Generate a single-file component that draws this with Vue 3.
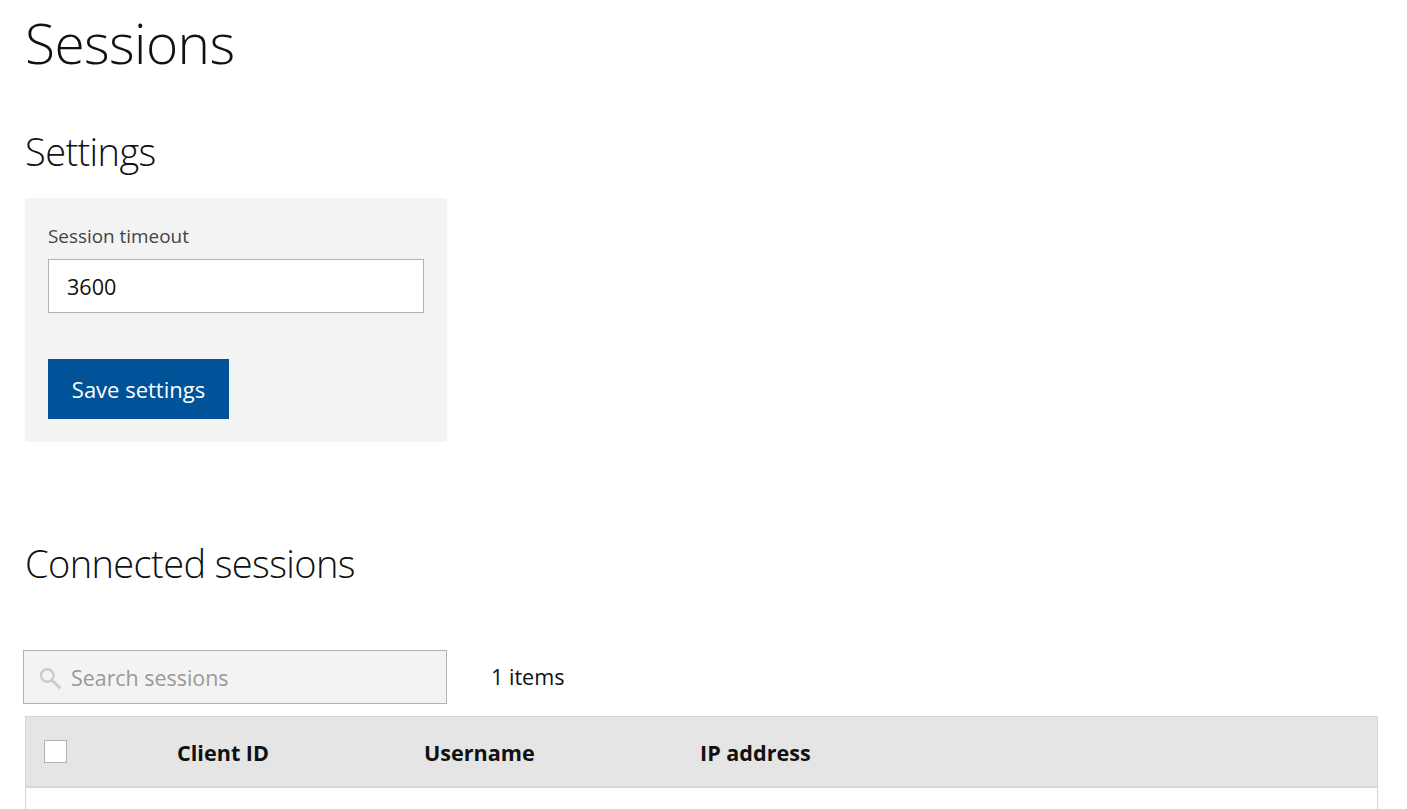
<template>
  <div class="page">
    <h1 class="title">Sessions</h1>

    <section class="settings">
      <h2 class="heading">Settings</h2>
      <form class="panel" @submit.prevent>
        <label class="label" for="timeout">Session timeout</label>
        <input id="timeout" v-model="timeout" class="text-input" type="text" />
        <button class="save" type="submit">Save settings</button>
      </form>
    </section>

    <section class="connected">
      <h2 class="heading">Connected sessions</h2>
      <div class="toolbar">
        <div class="search">
          <svg class="search-icon" width="23" height="23" viewBox="0 0 23 23" fill="none">
            <circle cx="8.3" cy="8.5" r="6.3" stroke="#cccccc" stroke-width="2.5" />
            <path d="M12.8 13l8.4 8.4" stroke="#cccccc" stroke-width="3" />
          </svg>
          <input class="search-input" type="text" placeholder="Search sessions" />
        </div>
        <span class="count">{{ sessions.length }} items</span>
      </div>
      <div class="table">
        <div class="table-head">
          <span class="check"></span>
          <span v-for="col in columns" :key="col.name" class="col" :style="{ width: col.width + 'px' }">{{ col.name }}</span>
        </div>
        <div class="table-body"></div>
      </div>
    </section>
  </div>
</template>

<script setup>
import { ref } from 'vue'

const timeout = ref('3600')
const sessions = ref([{ id: 1 }])
const columns = [
  { name: 'Client ID', width: 247 },
  { name: 'Username', width: 276 },
  { name: 'IP address', width: 200 }
]
</script>

<style>
html, body {
  margin: 0;
  background: #fff;
  overflow: hidden;
}
</style>

<style scoped>
.page {
  height: 809px;
  overflow: hidden;
  padding: 0 29px 0 25px;
  font-family: "Open Sans", "Noto Sans", sans-serif;
  color: #111;
}

.title {
  margin: 0;
  padding-top: 7px;
  font-size: 55px;
  line-height: 72px;
  font-weight: 300;
  letter-spacing: -0.6px;
}

.settings {
  margin-top: 49px;
}

.heading {
  margin: 0;
  font-size: 38px;
  line-height: 46px;
  font-weight: 300;
  letter-spacing: -0.6px;
}

.panel {
  display: flex;
  flex-direction: column;
  align-items: flex-start;
  box-sizing: border-box;
  width: 422px;
  height: 244px;
  margin-top: 24px;
  padding: 23px;
  background: #f3f3f3;
  border-radius: 2px;
}

.label {
  font-size: 18.9px;
  line-height: 30px;
  color: #444;
}

.text-input {
  box-sizing: border-box;
  width: 376px;
  height: 54px;
  margin-top: 8px;
  padding: 0 18px;
  border: 1px solid #b3b3b3;
  background: #fff;
  font: inherit;
  font-size: 21.6px;
  color: #111;
  outline: none;
}

.save {
  width: 181px;
  height: 60px;
  margin-top: 46px;
  padding: 0;
  border: 0;
  background: #005299;
  color: #fff;
  font: inherit;
  font-size: 22px;
}

.connected {
  margin-top: 98px;
}

.toolbar {
  display: flex;
  align-items: center;
  margin: 64px 0 12px -2px;
}

.search {
  position: relative;
  box-sizing: border-box;
  width: 424px;
  height: 54px;
  border: 1px solid #b3b3b3;
  background: #f3f3f3;
}

.search-icon {
  position: absolute;
  left: 15px;
  top: 16px;
}

.search-input {
  box-sizing: border-box;
  width: 100%;
  height: 100%;
  padding: 0 0 0 47px;
  border: 0;
  background: transparent;
  font: inherit;
  font-size: 21.4px;
  outline: none;
}

.search-input::placeholder {
  color: #999;
  opacity: 1;
}

.count {
  margin-left: 44px;
  font-size: 21.6px;
  line-height: 54px;
}

.table {
  border: 1px solid #d6d6d6;
  border-width: 0 1px;
}

.table-head {
  display: flex;
  align-items: center;
  box-sizing: border-box;
  height: 72px;
  border-top: 1px solid #d6d6d6;
  border-bottom: 2px solid #d6d6d6;
  background: #e5e5e5;
  padding-left: 18px;
}

.check {
  box-sizing: border-box;
  width: 23px;
  height: 23px;
  margin-right: 110px;
  border: 1px solid #b3b3b3;
  background: #fff;
}

.col {
  font-size: 21.6px;
  font-weight: 700;
  padding-top: 1px;
}

.table-body {
  height: 40px;
}
</style>
